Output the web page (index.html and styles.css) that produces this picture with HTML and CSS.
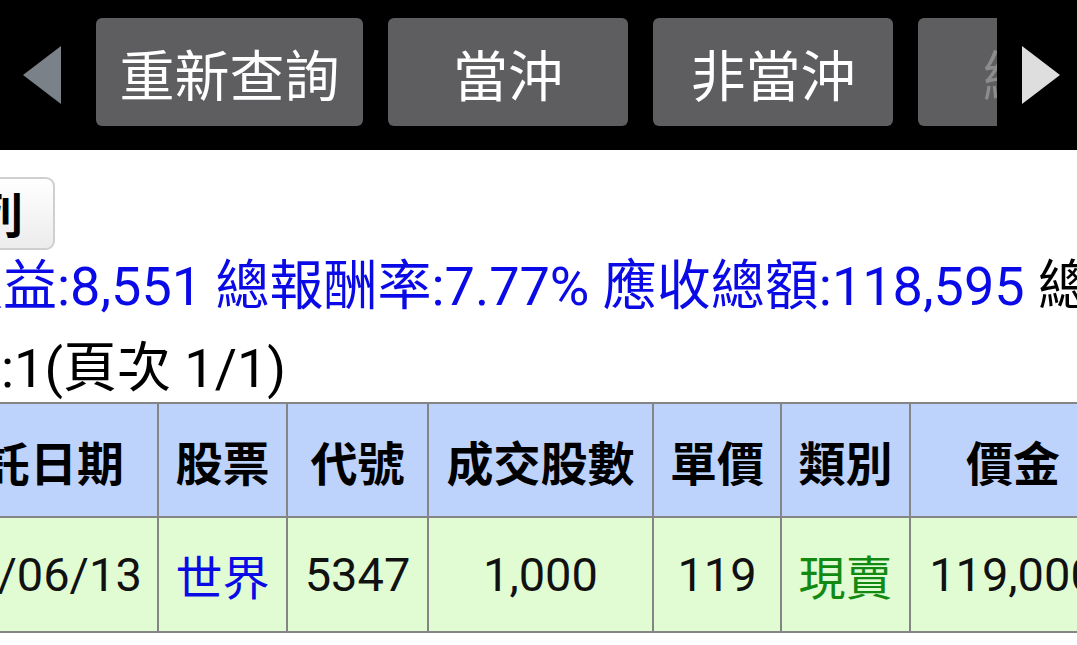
FILE: index.html
```html
<!DOCTYPE html>
<html lang="zh-Hant">
<head>
<meta charset="utf-8">
<title>查詢</title>
<link rel="stylesheet" href="styles.css">
</head>
<body>
<div class="topbar">
  <svg class="arrow arrow-left" viewBox="0 0 38 58" width="38" height="58"><polygon points="38,0 38,58 0,29" fill="#7a8189"/></svg>
  <div class="tabs">
    <div class="tab tab-wide">重新查詢</div>
    <div class="tab">當沖</div>
    <div class="tab">非當沖</div>
    <div class="tab tab-faded">綜合</div>
  </div>
  <svg class="arrow arrow-right" viewBox="0 0 38 58" width="38" height="58"><polygon points="0,0 38,29 0,58" fill="#dedede"/></svg>
</div>

<div class="content">
  <div class="actions"><span class="btn">排列</span></div>
  <div class="summary"><span class="blue">總損益:8,551 總報酬率:7.77% 應收總額:118,595</span> 總</div>
  <div class="count">筆數:1(頁次 1/1)</div>
  <table class="grid">
    <colgroup>
      <col class="c1"><col class="c2"><col class="c3"><col class="c4"><col class="c5"><col class="c6"><col class="c7"><col class="c8">
    </colgroup>
    <thead>
      <tr><th>委託日期</th><th>股票</th><th>代號</th><th>成交股數</th><th>單價</th><th>類別</th><th>價金</th><th>手續費</th></tr>
    </thead>
    <tbody>
      <tr><td>113/06/13</td><td class="blue">世界</td><td>5347</td><td>1,000</td><td>119</td><td class="green">現賣</td><td>119,000</td><td>169</td></tr>
    </tbody>
  </table>
</div>
</body>
</html>
```

FILE: styles.css
```css
html, body {
  margin: 0;
  padding: 0;
  background: #ffffff;
  overflow: hidden;
  width: 1077px;
  height: 645px;
}

body {
  font-family: Roboto, "Noto Sans CJK TC", sans-serif;
  color: #111111;
}

.topbar {
  height: 150px;
  background: #000000;
  display: flex;
  align-items: center;
  box-sizing: border-box;
  padding-left: 23px;
}

.arrow {
  flex: none;
  display: block;
}

.arrow-left {
  margin-right: 35px;
}

.arrow-right {
  margin-left: 25px;
}

.tabs {
  width: 901px;
  flex: none;
  display: flex;
  gap: 25px;
  overflow: hidden;
  margin-top: -6px;
}

.tab {
  flex: none;
  width: 240px;
  height: 108px;
  box-sizing: border-box;
  background: #5e5e60;
  border-radius: 6px;
  color: #ffffff;
  font-family: "Noto Sans CJK TC", sans-serif;
  font-size: 55px;
  line-height: 108px;
  text-align: center;
  white-space: nowrap;
}

.tab-wide {
  width: 267px;
}

.tab-faded {
  color: #8c8c8c;
}

.content {
  margin-left: -90px;
  white-space: nowrap;
}

.actions {
  padding-top: 27px;
  height: 73px;
}

.btn {
  display: inline-block;
  box-sizing: border-box;
  width: 145px;
  height: 73px;
  border: 2px solid #cfcfcf;
  border-radius: 9px;
  background: linear-gradient(#ffffff, #ececec);
  font-family: "Noto Sans CJK TC", sans-serif;
  font-weight: bold;
  font-size: 48px;
  line-height: 67px;
  text-align: right;
  padding-right: 30px;
  color: #000000;
}

.summary {
  font-size: 54px;
  height: 73px;
  line-height: 73px;
  text-indent: -15px;
  color: #000000;
}

.count {
  font-size: 54px;
  height: 66px;
  line-height: 66px;
  padding-top: 13px;
  text-indent: -17px;
  color: #000000;
}

.blue {
  color: #0a0ae6;
}

.green {
  color: #128a12;
}

.grid {
  border-collapse: collapse;
  table-layout: fixed;
  width: 1410px;
  margin-left: -9px;
}

.c1 { width: 256px; }
.c2 { width: 129px; }
.c3 { width: 141px; }
.c4 { width: 225px; }
.c5 { width: 128px; }
.c6 { width: 129px; }
.c7 { width: 206px; }
.c8 { width: 196px; }

.grid th,
.grid td {
  border: 2px solid #858585;
  text-align: center;
  font-size: 47px;
  padding: 0;
  white-space: nowrap;
  overflow: hidden;
}

.grid th {
  background: #bdd3fc;
  font-weight: bold;
  color: #000000;
  height: 112px;
  font-family: "Noto Sans CJK TC", sans-serif;
}

.grid td {
  background: #e1fcd3;
  height: 113px;
}
```
